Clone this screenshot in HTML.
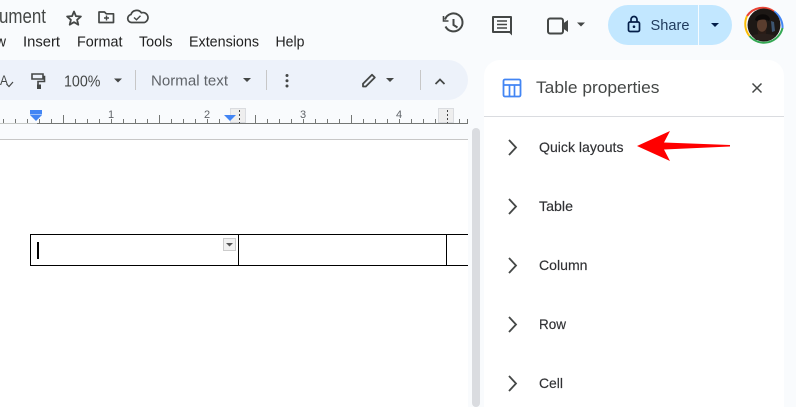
<!DOCTYPE html>
<html><head><meta charset="utf-8">
<style>
html,body{margin:0;padding:0;width:796px;height:407px;overflow:hidden;background:#f9fbfd}
svg{display:block}
text{font-family:"Liberation Sans",Arial,sans-serif}
</style></head><body>
<svg width="796" height="407" viewBox="0 0 796 407" xmlns="http://www.w3.org/2000/svg">
<rect width="796" height="407" fill="#f9fbfd"/>
<!-- Title -->
<text x="-1" y="23" font-size="20" fill="#444746" textLength="47" lengthAdjust="spacingAndGlyphs">ument</text>
<path d="M74 11.500l1.900 4.600 5 .4-3.800 3.300 1.200 4.900-4.300-2.600-4.300 2.600 1.200-4.900-3.800-3.300 5-.4z" fill="none" stroke="#444746" stroke-width="1.800" stroke-linejoin="round"/>
<path d="M99 22.500v-10.500h5.500l1.800 1.800h7.200v8.700z" fill="none" stroke="#444746" stroke-width="1.700" stroke-linejoin="round"/>
<path d="M106.500 15.500v5M104 18h5" stroke="#444746" stroke-width="1.400"/>
<path d="M134 22.500h-2.500a4 4 0 0 1-.6-7.900a6 6 0 0 1 10.500-1.800a5 5 0 0 1 3 9.700z" fill="none" stroke="#444746" stroke-width="1.700" stroke-linejoin="round"/>
<path d="M134 17.500l2.500 2.300 4-4" fill="none" stroke="#444746" stroke-width="1.400"/>
<!-- Menu -->
<g font-size="14.500" fill="#1f1f1f">
<text x="-4" y="46.500" textLength="10" lengthAdjust="spacingAndGlyphs">w</text>
<text x="23" y="46.500" textLength="37" lengthAdjust="spacingAndGlyphs">Insert</text>
<text x="77" y="46.500" textLength="45.500" lengthAdjust="spacingAndGlyphs">Format</text>
<text x="139" y="46.500" textLength="33.500" lengthAdjust="spacingAndGlyphs">Tools</text>
<text x="189" y="46.500" textLength="70" lengthAdjust="spacingAndGlyphs">Extensions</text>
<text x="275.500" y="46.500" textLength="29" lengthAdjust="spacingAndGlyphs">Help</text>
</g>
<!-- Toolbar -->
<path d="M0 60h448a20 20 0 0 1 0 40H0z" fill="#edf2fa"/>
<text x="0" y="85" font-size="14" fill="#444746" textLength="8" lengthAdjust="spacingAndGlyphs">A</text>
<path d="M6.500 84l2.500 2.500 4-4.500" fill="none" stroke="#444746" stroke-width="1.200"/>
<path d="M32 74h11v5h-11zM43 76.500h1.500v5h-6.500v3" fill="none" stroke="#444746" stroke-width="1.600"/>
<rect x="37" y="84.500" width="4" height="4.500" fill="#444746"/>
<text x="64" y="86.500" font-size="15.500" fill="#444746" textLength="36.500" lengthAdjust="spacingAndGlyphs">100%</text>
<path d="M114 78.500h8l-4 4z" fill="#444746"/>
<rect x="135" y="70" width="1" height="20" fill="#c7c7c7"/>
<text x="151" y="85.500" font-size="15" fill="#5f6368" textLength="77" lengthAdjust="spacingAndGlyphs">Normal text</text>
<path d="M243 78h8l-4 4z" fill="#444746"/>
<rect x="266" y="70" width="1" height="20" fill="#c7c7c7"/>
<circle cx="287" cy="75.500" r="1.500" fill="#444746"/><circle cx="287" cy="80.700" r="1.500" fill="#444746"/><circle cx="287" cy="86" r="1.500" fill="#444746"/>
<path d="M363 86.500v-2.800l9-9 2.800 2.800-9 9z" fill="none" stroke="#444746" stroke-width="1.800" stroke-linejoin="round"/>
<path d="M386 78h8l-4 4z" fill="#444746"/>
<rect x="420" y="70" width="1" height="20" fill="#c7c7c7"/>
<path d="M435.500 84l4.500-4.500 4.500 4.500" fill="none" stroke="#444746" stroke-width="1.700"/>
<!-- Ruler -->
<rect x="0" y="123" width="37" height="1" fill="#c4c7c5"/>
<rect x="37" y="123" width="431" height="1" fill="#747775"/>
<path stroke="#747775" stroke-width="1" d="M3.500 119v4M15.500 119v4M27.500 119v4M39.500 119v4M51.500 119v4M63.500 115v8M75.500 119v4M87.500 119v4M99.500 119v4M111.500 119v4M123.500 119v4M135.500 119v4M147.500 119v4M159.500 115v8M171.500 119v4M183.500 119v4M195.500 119v4M207.500 119v4M219.500 119v4M231.500 119v4M243.500 119v4M255.500 115v8M267.500 119v4M279.500 119v4M291.500 119v4M303.500 119v4M315.500 119v4M327.500 119v4M339.500 119v4M351.500 115v8M363.500 119v4M375.500 119v4M387.500 119v4M399.500 119v4M411.500 119v4M423.500 119v4M435.500 119v4M447.500 115v8M459.500 119v4M467.500 119v4"/>
<g font-size="11" fill="#5f6368" text-anchor="middle">
<text x="111" y="118">1</text><text x="207" y="118">2</text><text x="303" y="118">3</text><text x="399" y="118">4</text>
</g>
<rect x="230.500" y="108.500" width="15" height="14" fill="#eeeeee" stroke="#dadce0"/>
<path d="M239.500 110v13" stroke="#444" stroke-dasharray="2 2"/>
<rect x="438.500" y="108.500" width="15" height="14" fill="#eeeeee" stroke="#dadce0"/>
<path d="M447.500 110v13" stroke="#444" stroke-dasharray="2 2"/>
<rect x="30" y="110" width="12" height="4.500" fill="#4285f4"/>
<path d="M30 115h12l-6 6z" fill="#4285f4"/>
<path d="M224 115h12l-6 6z" fill="#4285f4"/>
<!-- Doc -->
<rect x="0" y="139" width="468" height="268" fill="#ffffff"/>
<rect x="0" y="139" width="468" height="1" fill="#c7c7c7"/>
<rect x="468" y="128" width="16" height="279" fill="#f9fbfd"/>
<rect x="472" y="128" width="8" height="279" rx="4" fill="#dadce0"/>
<!-- Table -->
<path d="M468 234.500H30.500v31H468M238.500 234v32M446.500 234v32" fill="none" stroke="#000" stroke-width="1"/>
<rect x="37" y="242" width="2" height="17" fill="#000"/>
<rect x="223.500" y="238.500" width="12" height="12" fill="#f1f1f1" stroke="#cccccc"/>
<path d="M226 243h7l-3.500 3.500z" fill="#555"/>
<!-- Top right icons -->
<g fill="none" stroke="#444746" stroke-width="2">
<path d="M445 19.500a9 9 0 1 1 .5 7"/>
<path d="M443.500 16v5h5" stroke-width="1.600"/>
<path d="M453.500 19v6l4 2.500"/>
<path d="M493 17h18v15h-18z" stroke-linejoin="round"/>
<path d="M497 21h10M497 24.500h10M497 28h10" stroke-width="1.500"/>
<path d="M548 20.500a2 2 0 0 1 2-2h11a2 2 0 0 1 2 2v11a2 2 0 0 1-2 2h-11a2 2 0 0 1-2-2z"/>
</g>
<path d="M512 31v4.500l-4.500-4.500z" fill="#444746"/>
<path d="M563 23.500l5-3.500v12l-5-3.500z" fill="#444746"/>
<path d="M577 22.500h8l-4 4z" fill="#444746"/>
<!-- Share -->
<path d="M628 5h84a20 20 0 0 1 0 40h-84a20 20 0 0 1 0-40z" fill="#c2e7ff"/>
<rect x="698" y="5" width="1" height="40" fill="#f5fbff"/>
<rect x="628.500" y="22" width="11" height="9.500" rx="1.500" fill="none" stroke="#041e49" stroke-width="1.700"/>
<path d="M631 22v-2.500a3 3 0 0 1 6 0V22" fill="none" stroke="#041e49" stroke-width="1.700"/>
<circle cx="634" cy="26.700" r="1.300" fill="#041e49"/>
<text x="650.500" y="30" font-size="15" fill="#1f3a5c" textLength="39" lengthAdjust="spacingAndGlyphs">Share</text>
<path d="M711 23h8l-4 4z" fill="#041e49"/>
<!-- Avatar -->
<g fill="none" stroke-width="2">
<path d="M747 16a19 19 0 0 1 27-4.500" stroke="#ea4335"/>
<path d="M774 11.500a19 19 0 0 1 8.500 17" stroke="#4285f4"/>
<path d="M782.500 28a19 19 0 0 1-33 8" stroke="#34a853"/>
<path d="M749.500 36a19 19 0 0 1-2.500-20" stroke="#fbbc04"/>
</g>
<circle cx="764" cy="25" r="16.500" fill="#1d1815"/>
<ellipse cx="762" cy="25" rx="5" ry="7" fill="#5a3d2e"/>
<path d="M755 20c1-7 13-8 15-1l-1 2c-3-2-8-2-12 0z" fill="#0d0a09"/>
<path d="M757.500 28c2 5 7 5 9 0l-.5 6h-8z" fill="#2a1c16"/>
<path d="M771 21l3 1 1 9-3 1z" fill="#3d5570"/>
<path d="M752 36c4-3 18-3 23 0l-4 4h-15z" fill="#2a201c"/>
<!-- Side panel -->
<path d="M500 60h268a16 16 0 0 1 16 16v331H484V76a16 16 0 0 1 16-16z" fill="#ffffff"/>
<rect x="484" y="116" width="300" height="1" fill="#dadce0"/>
<rect x="503.500" y="79.500" width="17" height="17" rx="1.500" fill="none" stroke="#4285f4" stroke-width="1.800"/>
<path d="M503.500 85h17M509.500 85v11M514.500 85v11" fill="none" stroke="#4285f4" stroke-width="1.700"/>
<text x="536" y="93" font-size="17" fill="#444746" textLength="123.500" lengthAdjust="spacingAndGlyphs">Table properties</text>
<path d="M752.500 83.500l9 9M761.500 83.500l-9 9" stroke="#444746" stroke-width="1.500" fill="none"/>
<g fill="none" stroke="#444746" stroke-width="1.800">
<path d="M509 140l7 7.500-7 7.500"/>
<path d="M509 199l7 7.500-7 7.500"/>
<path d="M509 258l7 7.500-7 7.500"/>
<path d="M509 317l7 7.500-7 7.500"/>
<path d="M509 376l7 7.500-7 7.500"/>
</g>
<g font-size="14" fill="#303134" stroke="#303134" stroke-width="0.150">
<text x="539" y="152" textLength="84.500" lengthAdjust="spacingAndGlyphs">Quick layouts</text>
<text x="539" y="211" textLength="34" lengthAdjust="spacingAndGlyphs">Table</text>
<text x="539" y="270" textLength="48.500" lengthAdjust="spacingAndGlyphs">Column</text>
<text x="539" y="329" textLength="27" lengthAdjust="spacingAndGlyphs">Row</text>
<text x="539" y="388" textLength="24" lengthAdjust="spacingAndGlyphs">Cell</text>
</g>
<!-- Arrow -->
<path d="M637 146L670 131L664 142.500L730 145L730 146.500L664 149.500L670 161z" fill="#ff0000"/>
</svg>
</body></html>
